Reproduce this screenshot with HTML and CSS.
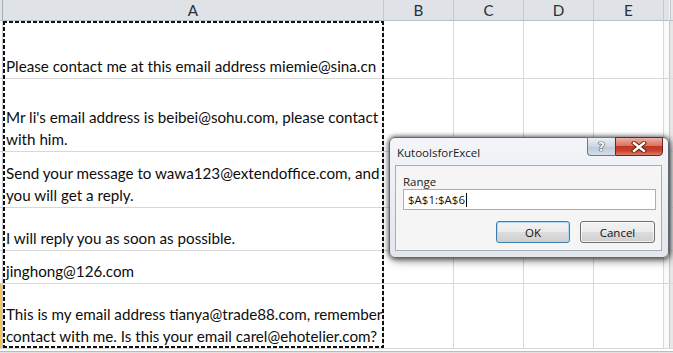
FILE: index.html
```html
<!DOCTYPE html>
<html lang="en">
<head>
  <meta charset="UTF-8">
  <title>KutoolsforExcel</title>
  <link rel="stylesheet" href="styles.css">
</head>
<body>
  <div class="screen">
    <div class="sheet">
      <div class="corner"></div>
      <div class="col-head">A</div>
      <div class="col-head">B</div>
      <div class="col-head">C</div>
      <div class="col-head">D</div>
      <div class="col-head">E</div>
      <div class="head-rest"></div>

      <div class="row-head"></div>
      <div class="cell text">Please contact me at this email address miemie@sina.cn</div>
      <div class="cell"></div><div class="cell"></div><div class="cell"></div><div class="cell"></div>
      <div class="rest"></div>

      <div class="row-head"></div>
      <div class="cell text">Mr li's email address is beibei@sohu.com, please contact<br>with him.</div>
      <div class="cell"></div><div class="cell"></div><div class="cell"></div><div class="cell"></div>
      <div class="rest"></div>

      <div class="row-head"></div>
      <div class="cell text">Send your message to wawa123@extendoffice.com, and<br>you will get a reply.</div>
      <div class="cell"></div><div class="cell"></div><div class="cell"></div><div class="cell"></div>
      <div class="rest"></div>

      <div class="row-head"></div>
      <div class="cell text">I will reply you as soon as possible.</div>
      <div class="cell"></div><div class="cell"></div><div class="cell"></div><div class="cell"></div>
      <div class="rest"></div>

      <div class="row-head"></div>
      <div class="cell text">jinghong@126.com</div>
      <div class="cell"></div><div class="cell"></div><div class="cell"></div><div class="cell"></div>
      <div class="rest"></div>

      <div class="row-head active"></div>
      <div class="cell text">This is my email address tianya@trade88.com, remember<br>contact with me. Is this your email carel@ehotelier.com?</div>
      <div class="cell"></div><div class="cell"></div><div class="cell"></div><div class="cell"></div>
      <div class="rest"></div>

      <div class="sheet-foot"></div>
    </div>

    <div class="marquee"></div>

    <div class="dialog">
      <div class="title-bar">
        <span class="title">KutoolsforExcel</span>
        <div class="caption-buttons">
          <div class="btn-help">?</div>
          <div class="btn-close">
            <svg width="16" height="12" viewBox="0 0 16 12">
              <path d="M3 2 L13 10 M13 2 L3 10" stroke="#5a1a12" stroke-width="4.2" stroke-linecap="square"/>
              <path d="M3 2 L13 10 M13 2 L3 10" stroke="#fff" stroke-width="2.4" stroke-linecap="square"/>
            </svg>
          </div>
        </div>
      </div>
      <div class="panel">
        <label class="field-label" for="range">Range</label>
        <div class="field" id="range">$A$1:$A$6<span class="caret"></span></div>
        <div class="actions">
          <button type="button" class="push default">OK</button>
          <button type="button" class="push">Cancel</button>
        </div>
      </div>
    </div>
  </div>
</body>
</html>
```

FILE: styles.css
```css
html {
  margin: 0;
  padding: 0;
}

body {
  margin: 0;
  background: #fff;
}

.screen {
  position: relative;
  width: 673px;
  height: 353px;
  overflow: hidden;
}

.sheet {
  display: grid;
  grid-template-columns: 3px 381px 70px 70px 70px 70px 1fr;
  grid-template-rows: 21px 58px 73px 56px 43px 33px 65px 1fr;
  height: 100%;

  font-family: "Lato", sans-serif;
  font-size: 15.2px;
  color: #0d0d0d;

  >div {
    box-sizing: border-box;
  }
}

.corner,
.col-head,
.head-rest {
  background: #dfe3e8;
  border-bottom: 1px solid #b9bfc7;
}

.corner {
  border-right: 1px solid #a9afb7;
}

.col-head {
  display: flex;
  align-items: center;
  justify-content: center;
  border-right: 1px solid #c5cad1;
  color: #27313d;
  line-height: 20px;
}

.head-rest {
  background: linear-gradient(90deg, #dfe3e8 0 5px, #f2f2f2 5px 6px, #c9c9c9 6px 7px, #e6e6e6 7px);
}

.row-head {
  border-right: 1px solid #c8ccd2;
  border-bottom: 1px solid #d8d8d8;

  &.active {
    background: #f4c35b;
  }
}

.cell {
  border-right: 1px solid #d8d8d8;
  border-bottom: 1px solid #d8d8d8;
}

.text {
  display: flex;
  align-items: flex-end;
  padding: 0 2px 1px 3px;
  line-height: 22px;
  white-space: nowrap;
}

.rest {
  border-bottom: 1px solid #d8d8d8;
  background: linear-gradient(90deg, #fafafa 0 5px, #c9c9c9 5px 6px, #e6e6e6 6px);
}

.sheet-foot {
  grid-column: 1 / -1;
  background: linear-gradient(#fff 0 2px, #bdbdbd 2px 3px, #e2e2e2 3px);
}

/* copy selection around A1:A6 */
.marquee {
  position: absolute;
  left: 3px;
  top: 21px;
  width: 381px;
  height: 327px;
  background:
    repeating-linear-gradient(90deg, #111 0 4px, transparent 4px 6px) top left / 100% 2px no-repeat,
    repeating-linear-gradient(90deg, #111 0 4px, transparent 4px 6px) bottom left / 100% 2px no-repeat,
    repeating-linear-gradient(180deg, #111 0 4px, transparent 4px 6px) top left / 2px 100% no-repeat,
    repeating-linear-gradient(180deg, #111 0 4px, transparent 4px 6px) top right / 2px 100% no-repeat;
}

.dialog {
  position: absolute;
  left: 389px;
  top: 137px;
  width: 280px;
  height: 121px;
  box-sizing: border-box;
  display: flex;
  flex-direction: column;

  border: 1px solid #5f6873;
  border-radius: 6px;
  background: linear-gradient(#f3f5f8, #e2e7ed);
  box-shadow: 0 0 4px 1px rgba(0, 0, 0, 0.5), 2px 3px 8px rgba(0, 0, 0, 0.45);

  font-family: "Open Sans", sans-serif;
  font-size: 11px;
  color: #1b1b1b;
}

.title-bar {
  display: flex;
  height: 27px;
  flex: none;

  >.title {
    align-self: center;
    margin-left: 7px;
    margin-top: 1px;
    font-size: 11.5px;
    color: #151c28;
  }
}

.caption-buttons {
  display: flex;
  margin: -1px 5px 0 auto;
  height: 19px;
}

.btn-help {
  box-sizing: border-box;
  width: 28px;
  display: flex;
  align-items: center;
  justify-content: center;
  border: 1px solid #6e7a87;
  border-right: none;
  border-radius: 0 0 0 4px;
  background: linear-gradient(#e9eef4, #cdd7e2 50%, #bccad8 51%, #d3dde7);
  color: #fff;
  font-family: "DejaVu Sans", sans-serif;
  font-size: 12px;
  font-weight: bold;
  text-shadow: 0 0 1px #2c333b, 0 0 1px #2c333b, 0 0 1px #2c333b;
}

.btn-close {
  box-sizing: border-box;
  width: 48px;
  display: flex;
  align-items: center;
  justify-content: center;
  border: 1px solid #6f261c;
  border-radius: 0 0 4px 0;
  background: linear-gradient(#eab1a5, #d8735f 45%, #c2361f 50%, #c74330 75%, #de7e68);
}

.panel {
  flex: 1;
  margin: 0 6px 6px 5px;
  padding: 8px 6px 0 7px;
  border: 1px solid #a4aebb;
  background: #f5f5f5;
}

.field-label {
  display: block;
  line-height: 15px;
  font-size: 11.5px;
}

.field {
  box-sizing: border-box;
  width: 253px;
  height: 21px;
  display: flex;
  align-items: center;
  padding-left: 4px;
  border: 1px solid #abadb3;
  background: #fff;
  color: #111;
  font-size: 11.5px;

  >.caret {
    width: 1px;
    height: 14px;
    margin-left: 1px;
    background: #000;
  }
}

.actions {
  display: flex;
  justify-content: flex-end;
  gap: 10px;
  margin-top: 11px;
  width: 252px;
}

.push {
  box-sizing: border-box;
  width: 75px;
  height: 22px;
  padding: 0;
  border: 1px solid #707070;
  border-radius: 3px;
  background: linear-gradient(#f2f2f2, #ebebeb 50%, #dddddd 51%, #cfcfcf);
  box-shadow: inset 0 0 0 1px rgba(255, 255, 255, 0.7);
  font-family: "Open Sans", sans-serif;
  font-size: 11.5px;
  color: #111;

  &.default {
    width: 74px;
    border-color: #3c7fb1;
    box-shadow: inset 0 0 0 1px #a8dcf5;
  }
}
```
